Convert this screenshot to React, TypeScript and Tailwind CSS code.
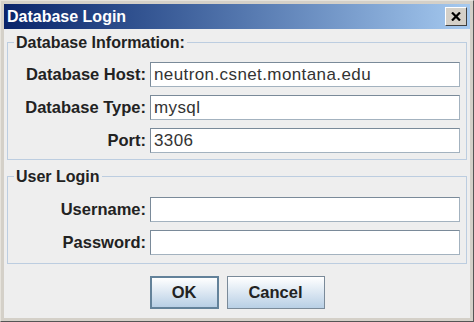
import type { ReactNode } from "react";

const font = { fontFamily: '"Liberation Sans", Arial, sans-serif' };

const Field = ({ label, value }: { label: string; value?: string }) => (
  <>
    <label className="h-[25px] flex items-center justify-end text-[16.5px] font-bold text-[#222]">
      {label}
    </label>
    <div className="h-[25px] flex items-center bg-white border border-[#7a8a99] border-b-[#a3b2bf] border-r-[#a3b2bf] px-[3px] text-[17px] tracking-[0.4px] text-[#333]">
      {value}
    </div>
  </>
);

const Group = ({ title, children, className }: { title: string; children: ReactNode; className?: string }) => (
  <fieldset className={`mx-[3px] border border-[#bccde0] px-[6px] ${className ?? ""}`}>
    <legend className="px-[2px] text-[16px] font-bold text-[#222] leading-[19px]">{title}</legend>
    <div className="grid grid-cols-[132px_1fr] gap-x-[4px] gap-y-[8px]">{children}</div>
  </fieldset>
);

export default function App() {
  return (
    <div
      style={font}
      className="w-[474px] h-[322px] flex flex-col bg-[#d4d0c8] border border-t-[#e6e3dc] border-l-[#e6e3dc] border-r-[#555] border-b-[#555] p-[3px]"
    >
      <div className="h-[25px] shrink-0 flex items-center justify-between bg-gradient-to-r from-[#0a246a] to-[#a6caf0] pl-[3px] pr-[3px]">
        <span className="text-white font-bold text-[16px]">Database Login</span>
        <button className="w-[22px] h-[19px] flex items-center justify-center bg-[#d4d0c8] border border-t-white border-l-white border-r-[#404040] border-b-[#404040]">
          <svg width="10" height="9" viewBox="0 0 10 9">
            <path d="M1 0.5 L9 8.5 M9 0.5 L1 8.5" stroke="#000" strokeWidth="2.2" />
          </svg>
        </button>
      </div>
      <div className="flex-1 flex flex-col bg-[#eeeeee] pt-[4px]">
        <Group title="Database Information:" className="pt-[10px] pb-[6px]">
          <Field label="Database Host:" value="neutron.csnet.montana.edu" />
          <Field label="Database Type:" value="mysql" />
          <Field label="Port:" value="3306" />
        </Group>
        <Group title="User Login" className="mt-[7px] pt-[11px] pb-[8px]">
          <Field label="Username:" />
          <Field label="Password:" />
        </Group>
        <div className="flex justify-center gap-[8px] mt-[12px]">
          <button className="w-[69px] h-[33px] border-2 border-[#63829a] bg-gradient-to-b from-white to-[#b8cfe5] text-[16.5px] font-bold text-[#222]">
            OK
          </button>
          <button className="w-[98px] h-[33px] border border-[#7a8a99] bg-gradient-to-b from-white to-[#b8cfe5] text-[16.5px] font-bold text-[#222]">
            Cancel
          </button>
        </div>
      </div>
    </div>
  );
}
